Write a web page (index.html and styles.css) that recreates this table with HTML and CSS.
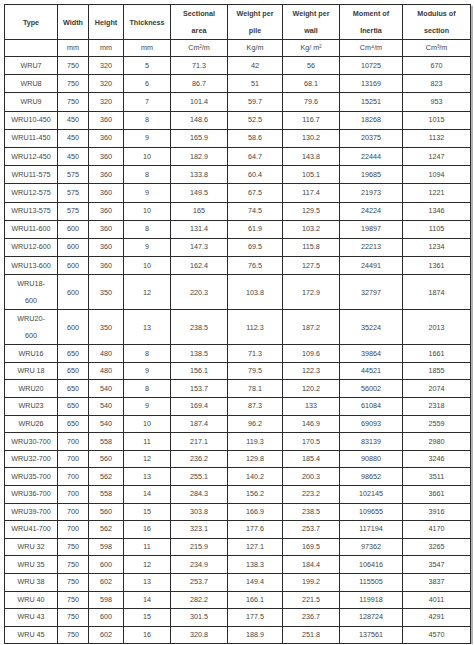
FILE: index.html
```html
<!DOCTYPE html>
<html>
<head>
<meta charset="utf-8">
<link rel="stylesheet" href="styles.css">
</head>
<body>
<table class="spec">
<colgroup>
<col class="c1"><col class="c2"><col class="c3"><col class="c4"><col class="c5"><col class="c6"><col class="c7"><col class="c8"><col class="c9">
</colgroup>
<tr class="head">
<th>Type</th><th>Width</th><th>Height</th><th>Thickness</th><th>Sectional<br>area</th><th>Weight per<br>pile</th><th>Weight per<br>wall</th><th>Moment of<br>Inertia</th><th>Modulus of<br>section</th>
</tr>
<tr class="units">
<td></td><td>mm</td><td>mm</td><td>mm</td><td>Cm²/m</td><td>Kg/m</td><td>Kg/ m²</td><td>Cm⁴/m</td><td>Cm³/m</td>
</tr>
<tr class="r1"><td>WRU7</td><td>750</td><td>320</td><td>5</td><td>71.3</td><td>42</td><td>56</td><td>10725</td><td>670</td></tr>
<tr class="r1"><td>WRU8</td><td>750</td><td>320</td><td>6</td><td>86.7</td><td>51</td><td>68.1</td><td>13169</td><td>823</td></tr>
<tr class="r1"><td>WRU9</td><td>750</td><td>320</td><td>7</td><td>101.4</td><td>59.7</td><td>79.6</td><td>15251</td><td>953</td></tr>
<tr class="r1"><td>WRU10-450</td><td>450</td><td>360</td><td>8</td><td>148.6</td><td>52.5</td><td>116.7</td><td>18268</td><td>1015</td></tr>
<tr class="r1"><td>WRU11-450</td><td>450</td><td>360</td><td>9</td><td>165.9</td><td>58.6</td><td>130.2</td><td>20375</td><td>1132</td></tr>
<tr class="r1"><td>WRU12-450</td><td>450</td><td>360</td><td>10</td><td>182.9</td><td>64.7</td><td>143.8</td><td>22444</td><td>1247</td></tr>
<tr class="r1"><td>WRU11-575</td><td>575</td><td>360</td><td>8</td><td>133.8</td><td>60.4</td><td>105.1</td><td>19685</td><td>1094</td></tr>
<tr class="r1"><td>WRU12-575</td><td>575</td><td>360</td><td>9</td><td>149.5</td><td>67.5</td><td>117.4</td><td>21973</td><td>1221</td></tr>
<tr class="r1"><td>WRU13-575</td><td>575</td><td>360</td><td>10</td><td>165</td><td>74.5</td><td>129.5</td><td>24224</td><td>1346</td></tr>
<tr class="r1"><td>WRU11-600</td><td>600</td><td>360</td><td>8</td><td>131.4</td><td>61.9</td><td>103.2</td><td>19897</td><td>1105</td></tr>
<tr class="r1"><td>WRU12-600</td><td>600</td><td>360</td><td>9</td><td>147.3</td><td>69.5</td><td>115.8</td><td>22213</td><td>1234</td></tr>
<tr class="r1"><td>WRU13-600</td><td>600</td><td>360</td><td>10</td><td>162.4</td><td>76.5</td><td>127.5</td><td>24491</td><td>1361</td></tr>
<tr class="r2"><td>WRU18-<br>600</td><td>600</td><td>350</td><td>12</td><td>220.3</td><td>103.8</td><td>172.9</td><td>32797</td><td>1874</td></tr>
<tr class="r2"><td>WRU20-<br>600</td><td>600</td><td>350</td><td>13</td><td>238.5</td><td>112.3</td><td>187.2</td><td>35224</td><td>2013</td></tr>
<tr class="r3"><td>WRU16</td><td>650</td><td>480</td><td>8</td><td>138.5</td><td>71.3</td><td>109.6</td><td>39864</td><td>1661</td></tr>
<tr class="r3"><td>WRU 18</td><td>650</td><td>480</td><td>9</td><td>156.1</td><td>79.5</td><td>122.3</td><td>44521</td><td>1855</td></tr>
<tr class="r3"><td>WRU20</td><td>650</td><td>540</td><td>8</td><td>153.7</td><td>78.1</td><td>120.2</td><td>56002</td><td>2074</td></tr>
<tr class="r3"><td>WRU23</td><td>650</td><td>540</td><td>9</td><td>169.4</td><td>87.3</td><td>133</td><td>61084</td><td>2318</td></tr>
<tr class="r3"><td>WRU26</td><td>650</td><td>540</td><td>10</td><td>187.4</td><td>96.2</td><td>146.9</td><td>69093</td><td>2559</td></tr>
<tr class="r3"><td>WRU30-700</td><td>700</td><td>558</td><td>11</td><td>217.1</td><td>119.3</td><td>170.5</td><td>83139</td><td>2980</td></tr>
<tr class="r3"><td>WRU32-700</td><td>700</td><td>560</td><td>12</td><td>236.2</td><td>129.8</td><td>185.4</td><td>90880</td><td>3246</td></tr>
<tr class="r3"><td>WRU35-700</td><td>700</td><td>562</td><td>13</td><td>255.1</td><td>140.2</td><td>200.3</td><td>98652</td><td>3511</td></tr>
<tr class="r3"><td>WRU36-700</td><td>700</td><td>558</td><td>14</td><td>284.3</td><td>156.2</td><td>223.2</td><td>102145</td><td>3661</td></tr>
<tr class="r3"><td>WRU39-700</td><td>700</td><td>560</td><td>15</td><td>303.8</td><td>166.9</td><td>238.5</td><td>109655</td><td>3916</td></tr>
<tr class="r3"><td>WRU41-700</td><td>700</td><td>562</td><td>16</td><td>323.1</td><td>177.6</td><td>253.7</td><td>117194</td><td>4170</td></tr>
<tr class="r3"><td>WRU 32</td><td>750</td><td>598</td><td>11</td><td>215.9</td><td>127.1</td><td>169.5</td><td>97362</td><td>3265</td></tr>
<tr class="r3"><td>WRU 35</td><td>750</td><td>600</td><td>12</td><td>234.9</td><td>138.3</td><td>184.4</td><td>106416</td><td>3547</td></tr>
<tr class="r3"><td>WRU 38</td><td>750</td><td>602</td><td>13</td><td>253.7</td><td>149.4</td><td>199.2</td><td>115505</td><td>3837</td></tr>
<tr class="r3"><td>WRU 40</td><td>750</td><td>598</td><td>14</td><td>282.2</td><td>166.1</td><td>221.5</td><td>119918</td><td>4011</td></tr>
<tr class="r3"><td>WRU 43</td><td>750</td><td>600</td><td>15</td><td>301.5</td><td>177.5</td><td>236.7</td><td>128724</td><td>4291</td></tr>
<tr class="r3"><td>WRU 45</td><td>750</td><td>602</td><td>16</td><td>320.8</td><td>188.9</td><td>251.8</td><td>137561</td><td>4570</td></tr>
</table>
</body>
</html>
```

FILE: styles.css
```css
html, body {
  margin: 0;
  padding: 0;
  background: #ffffff;
}

body {
  padding: 4px 0 0 4px;
}

.spec {
  border-collapse: collapse;
  table-layout: fixed;
  width: 467px;
  font-family: "Liberation Sans", Arial, sans-serif;
  font-size: 7.2px;
  color: #444444;
  box-shadow: 2px 2px 0 #b5b5b5;
}

.spec th,
.spec td {
  border: 1px solid #2b2b2b;
  padding: 0;
  text-align: center;
  vertical-align: middle;
  line-height: 16px;
  white-space: nowrap;
  overflow: hidden;
}

.spec th {
  font-weight: bold;
  color: #3a3a3a;
  line-height: 17px;
}

.c1 { width: 53px; }
.c2 { width: 31px; }
.c3 { width: 35px; }
.c4 { width: 47px; }
.c5 { width: 57px; }
.c6 { width: 55px; }
.c7 { width: 57px; }
.c8 { width: 63px; }
.c9 { width: 68px; }

.head th { height: 34px; }
.units td { height: 16px; }
.r1 td { height: 17.2px; }
.r2 td { height: 33.5px; line-height: 17px; }
.r3 td { height: 16.6px; }
```
